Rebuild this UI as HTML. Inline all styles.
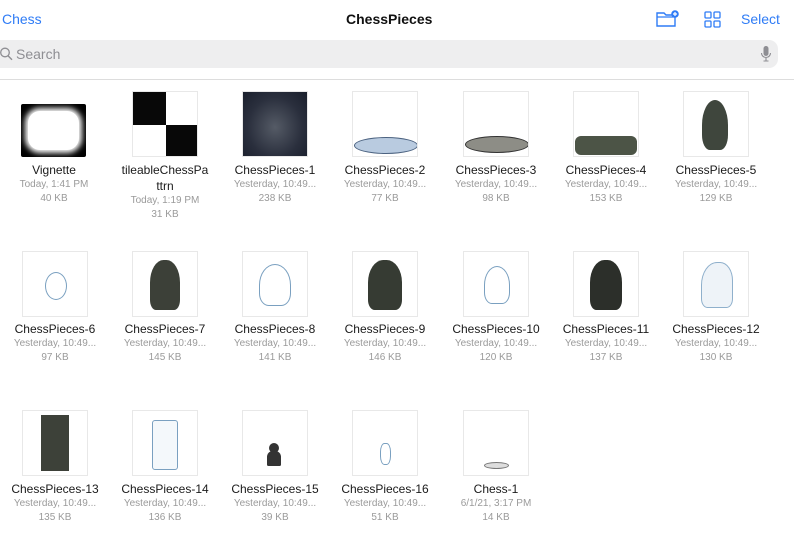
<!DOCTYPE html>
<html><head><style>
body{margin:0;width:794px;height:544px;background:#fff;font-family:"Liberation Sans",sans-serif;overflow:hidden;position:relative}
.a{position:absolute}
.blue{color:#2f7cf6}
.it{position:absolute;width:110px;text-align:center}
.th{position:absolute;left:22px;width:64px;height:64px;border:1px solid #e8e8e8;background:#fff;overflow:hidden}
.nm{position:absolute;left:0;width:110px;font-size:12px;color:#1a1a1a}
.dt{position:absolute;left:0;width:110px;font-size:10px;color:#9a9a9a}
</style></head><body>
<div class="a blue" style="left:2px;top:11px;font-size:14px">Chess</div>
<div class="a" style="left:346px;top:11px;font-size:14px;font-weight:bold;color:#111">ChessPieces</div>
<svg class="a" style="left:656px;top:10px" width="24" height="18" viewBox="0 0 24 18"><path d="M1 3h7l2 2h9v11H1z" fill="none" stroke="#2f7cf6" stroke-width="1.4"/><line x1="1" y1="7" x2="19" y2="7" stroke="#2f7cf6" stroke-width="1.2"/><circle cx="19" cy="4" r="3.8" fill="#2f7cf6"/><path d="M19 2v4M17 4h4" stroke="#fff" stroke-width="1.2"/></svg>
<svg class="a" style="left:704px;top:11px" width="17" height="17" viewBox="0 0 17 17"><g fill="none" stroke="#2f7cf6" stroke-width="1.3"><rect x="1" y="1" width="6" height="6" rx="1"/><rect x="10" y="1" width="6" height="6" rx="1"/><rect x="1" y="10" width="6" height="6" rx="1"/><rect x="10" y="10" width="6" height="6" rx="1"/></g></svg>
<div class="a blue" style="left:741px;top:11px;font-size:14px">Select</div>
<div class="a" style="left:-10px;top:40px;width:788px;height:28px;background:#eeeeef;border-radius:9px"></div>
<svg class="a" style="left:0px;top:47px" width="14" height="14" viewBox="0 0 14 14"><circle cx="5" cy="5.5" r="4.3" fill="none" stroke="#8e8e93" stroke-width="1.3"/><path d="M8 8.8l4 4" stroke="#8e8e93" stroke-width="1.4"/></svg>
<div class="a" style="left:16px;top:46px;font-size:14px;color:#8e8e93">Search</div>
<svg class="a" style="left:760px;top:45px" width="12" height="18" viewBox="0 0 12 18"><rect x="3.5" y="1" width="5" height="10" rx="2.5" fill="#8e8e93"/><path d="M1.5 8a4.5 4.5 0 0 0 9 0M6 12.5v3M3.5 16h5" fill="none" stroke="#8e8e93" stroke-width="1.1"/></svg>
<div class="a" style="left:0;top:79px;width:794px;height:1px;background:#ddd"></div>

<!-- row 1 -->
<div class="it" style="left:-1px;top:0">
<div class="a" style="left:22px;top:104px;width:65px;height:53px;background:#000;border-radius:2px;overflow:hidden"><div style="position:absolute;left:7px;top:7px;width:51px;height:39px;background:#fff;border-radius:12px;box-shadow:0 0 6px 3px #fff"></div></div>
<div class="nm" style="top:163px">Vignette</div><div class="dt" style="top:179px">Today, 1:41 PM</div><div class="dt" style="top:193px">40 KB</div></div>
<div class="it" style="left:110px;top:0">
<div class="th" style="top:91px;background:#fff"><div style="position:absolute;left:0;top:0;width:33px;height:33px;background:#080808"></div><div style="position:absolute;left:33px;top:33px;width:33px;height:33px;background:#080808"></div></div>
<div class="nm" style="top:163px">tileableChessPa</div><div class="nm" style="top:179px">ttrn</div><div class="dt" style="top:195px">Today, 1:19 PM</div><div class="dt" style="top:209px">31 KB</div></div>
<div class="it" style="left:220px;top:0">
<div class="th" style="top:91px;background:radial-gradient(ellipse at 50% 55%,#555b66,#2a2f3d 60%,#1a1f2c)"></div>
<div class="nm" style="top:163px">ChessPieces-1</div><div class="dt" style="top:179px">Yesterday, 10:49...</div><div class="dt" style="top:193px">238 KB</div></div>
<div class="it" style="left:330px;top:0">
<div class="th" style="top:91px"><div style="position:absolute;left:1px;top:45px;width:62px;height:15px;border-radius:50%;background:#b9cbe0;border:1px solid #4b6280"></div></div>
<div class="nm" style="top:163px">ChessPieces-2</div><div class="dt" style="top:179px">Yesterday, 10:49...</div><div class="dt" style="top:193px">77 KB</div></div>
<div class="it" style="left:441px;top:0">
<div class="th" style="top:91px"><div style="position:absolute;left:1px;top:44px;width:62px;height:15px;border-radius:50%;background:#8d8d86;border:1px solid #333"></div></div>
<div class="nm" style="top:163px">ChessPieces-3</div><div class="dt" style="top:179px">Yesterday, 10:49...</div><div class="dt" style="top:193px">98 KB</div></div>
<div class="it" style="left:551px;top:0">
<div class="th" style="top:91px"><div style="position:absolute;left:1px;top:44px;width:62px;height:19px;border-radius:6px;background:#4c5446"></div></div>
<div class="nm" style="top:163px">ChessPieces-4</div><div class="dt" style="top:179px">Yesterday, 10:49...</div><div class="dt" style="top:193px">153 KB</div></div>
<div class="it" style="left:661px;top:0">
<div class="th" style="top:91px"><div style="position:absolute;left:18px;top:8px;width:26px;height:50px;border-radius:50% 50% 30% 30%;background:#3f463d"></div></div>
<div class="nm" style="top:163px">ChessPieces-5</div><div class="dt" style="top:179px">Yesterday, 10:49...</div><div class="dt" style="top:193px">129 KB</div></div>

<!-- row 2 -->
<div class="it" style="left:0;top:0"><div class="th" style="top:251px"><div style="position:absolute;left:22px;top:20px;width:20px;height:26px;border:1px solid #7aa0c0;border-radius:50%"></div></div>
<div class="nm" style="top:322px">ChessPieces-6</div><div class="dt" style="top:338px">Yesterday, 10:49...</div><div class="dt" style="top:352px">97 KB</div></div>
<div class="it" style="left:110px;top:0"><div class="th" style="top:251px"><div style="position:absolute;left:17px;top:8px;width:30px;height:50px;border-radius:45% 45% 20% 20%;background:#3c4038"></div></div>
<div class="nm" style="top:322px">ChessPieces-7</div><div class="dt" style="top:338px">Yesterday, 10:49...</div><div class="dt" style="top:352px">145 KB</div></div>
<div class="it" style="left:220px;top:0"><div class="th" style="top:251px"><div style="position:absolute;left:16px;top:12px;width:30px;height:40px;border:1px solid #7aa0c0;border-radius:50% 50% 30% 30%"></div></div>
<div class="nm" style="top:322px">ChessPieces-8</div><div class="dt" style="top:338px">Yesterday, 10:49...</div><div class="dt" style="top:352px">141 KB</div></div>
<div class="it" style="left:330px;top:0"><div class="th" style="top:251px"><div style="position:absolute;left:15px;top:8px;width:34px;height:50px;border-radius:45% 45% 20% 20%;background:#363b33"></div></div>
<div class="nm" style="top:322px">ChessPieces-9</div><div class="dt" style="top:338px">Yesterday, 10:49...</div><div class="dt" style="top:352px">146 KB</div></div>
<div class="it" style="left:441px;top:0"><div class="th" style="top:251px"><div style="position:absolute;left:20px;top:14px;width:24px;height:36px;border:1px solid #7aa0c0;border-radius:50% 50% 30% 30%"></div></div>
<div class="nm" style="top:322px">ChessPieces-10</div><div class="dt" style="top:338px">Yesterday, 10:49...</div><div class="dt" style="top:352px">120 KB</div></div>
<div class="it" style="left:551px;top:0"><div class="th" style="top:251px"><div style="position:absolute;left:16px;top:8px;width:32px;height:50px;border-radius:45% 45% 20% 20%;background:#2c2f2a"></div></div>
<div class="nm" style="top:322px">ChessPieces-11</div><div class="dt" style="top:338px">Yesterday, 10:49...</div><div class="dt" style="top:352px">137 KB</div></div>
<div class="it" style="left:661px;top:0"><div class="th" style="top:251px"><div style="position:absolute;left:17px;top:10px;width:30px;height:44px;border:1px solid #8fb0cc;background:#eef3f8;border-radius:50% 40% 20% 20%"></div></div>
<div class="nm" style="top:322px">ChessPieces-12</div><div class="dt" style="top:338px">Yesterday, 10:49...</div><div class="dt" style="top:352px">130 KB</div></div>

<!-- row 3 -->
<div class="it" style="left:0;top:0"><div class="th" style="top:410px"><div style="position:absolute;left:18px;top:4px;width:28px;height:56px;background:#3d4139"></div></div>
<div class="nm" style="top:482px">ChessPieces-13</div><div class="dt" style="top:498px">Yesterday, 10:49...</div><div class="dt" style="top:512px">135 KB</div></div>
<div class="it" style="left:110px;top:0"><div class="th" style="top:410px"><div style="position:absolute;left:19px;top:9px;width:24px;height:48px;border:1px solid #7aa0c0;background:#f4f8fb;border-radius:3px"></div></div>
<div class="nm" style="top:482px">ChessPieces-14</div><div class="dt" style="top:498px">Yesterday, 10:49...</div><div class="dt" style="top:512px">136 KB</div></div>
<div class="it" style="left:220px;top:0"><div class="th" style="top:410px"><div style="position:absolute;left:26px;top:32px;width:10px;height:10px;border-radius:50%;background:#333"></div><div style="position:absolute;left:24px;top:40px;width:14px;height:15px;border-radius:40% 40% 10% 10%;background:#333"></div></div>
<div class="nm" style="top:482px">ChessPieces-15</div><div class="dt" style="top:498px">Yesterday, 10:49...</div><div class="dt" style="top:512px">39 KB</div></div>
<div class="it" style="left:330px;top:0"><div class="th" style="top:410px"><div style="position:absolute;left:27px;top:32px;width:9px;height:20px;border:1px solid #7aa0c0;border-radius:40%"></div></div>
<div class="nm" style="top:482px">ChessPieces-16</div><div class="dt" style="top:498px">Yesterday, 10:49...</div><div class="dt" style="top:512px">51 KB</div></div>
<div class="it" style="left:441px;top:0"><div class="th" style="top:410px"><div style="position:absolute;left:20px;top:51px;width:23px;height:5px;border-radius:50%;border:1px solid #777;background:#ddd"></div></div>
<div class="nm" style="top:482px">Chess-1</div><div class="dt" style="top:498px">6/1/21, 3:17 PM</div><div class="dt" style="top:512px">14 KB</div></div>
</body></html>
